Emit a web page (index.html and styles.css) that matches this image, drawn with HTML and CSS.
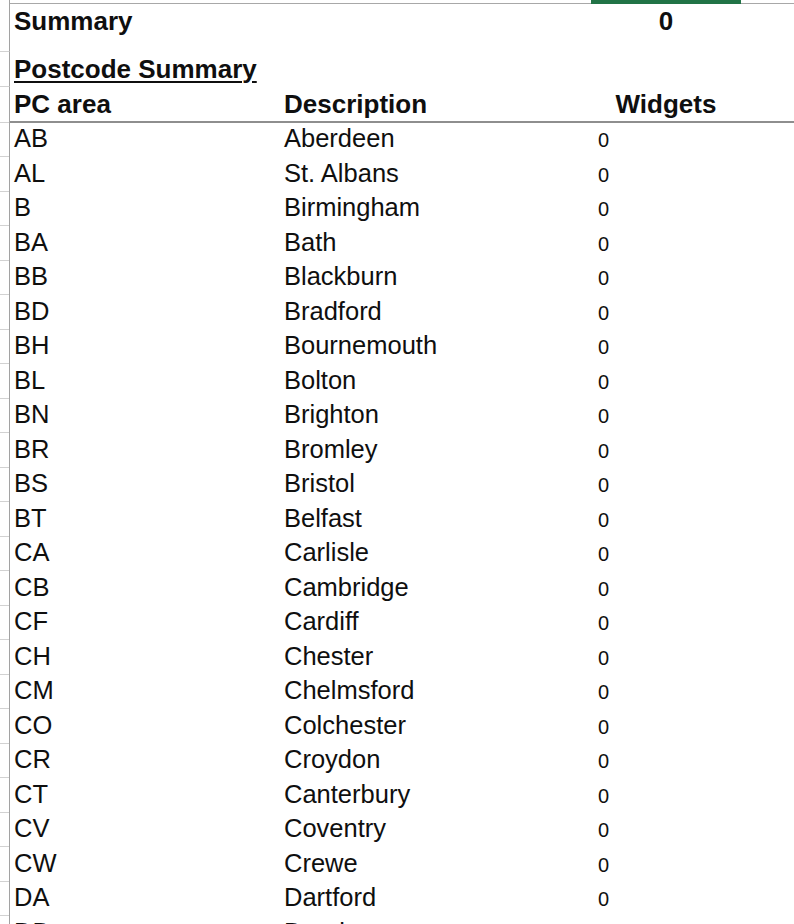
FILE: index.html
```html
<!DOCTYPE html>
<html lang="en">
<head>
<meta charset="utf-8">
<title>Postcode Summary</title>
<link rel="stylesheet" href="styles.css">
</head>
<body>
<div class="sheet">
  <div class="row strip">
    <div class="gut"></div>
    <div class="cell a"></div>
    <div class="cell b"></div>
    <div class="cell c sel"></div>
    <div class="cell d"></div>
  </div>
  <div class="row summary">
    <div class="gut"></div>
    <div class="cell a bold">Summary</div>
    <div class="cell b"></div>
    <div class="cell c bold center">0</div>
    <div class="cell d"></div>
  </div>
  <div class="row title">
    <div class="gut"></div>
    <div class="cell a bold wide"><span class="ul">Postcode Summary</span></div>
    <div class="cell c"></div>
    <div class="cell d"></div>
  </div>
  <div class="row head">
    <div class="gut"></div>
    <div class="cell a bold">PC area</div>
    <div class="cell b bold">Description</div>
    <div class="cell c bold center">Widgets</div>
    <div class="cell d"></div>
  </div>
  <div class="row data"><div class="gut"></div><div class="cell a">AB</div><div class="cell b">Aberdeen</div><div class="cell c num">0</div><div class="cell d"></div></div>
  <div class="row data"><div class="gut"></div><div class="cell a">AL</div><div class="cell b">St. Albans</div><div class="cell c num">0</div><div class="cell d"></div></div>
  <div class="row data"><div class="gut"></div><div class="cell a">B</div><div class="cell b">Birmingham</div><div class="cell c num">0</div><div class="cell d"></div></div>
  <div class="row data"><div class="gut"></div><div class="cell a">BA</div><div class="cell b">Bath</div><div class="cell c num">0</div><div class="cell d"></div></div>
  <div class="row data"><div class="gut"></div><div class="cell a">BB</div><div class="cell b">Blackburn</div><div class="cell c num">0</div><div class="cell d"></div></div>
  <div class="row data"><div class="gut"></div><div class="cell a">BD</div><div class="cell b">Bradford</div><div class="cell c num">0</div><div class="cell d"></div></div>
  <div class="row data"><div class="gut"></div><div class="cell a">BH</div><div class="cell b">Bournemouth</div><div class="cell c num">0</div><div class="cell d"></div></div>
  <div class="row data"><div class="gut"></div><div class="cell a">BL</div><div class="cell b">Bolton</div><div class="cell c num">0</div><div class="cell d"></div></div>
  <div class="row data"><div class="gut"></div><div class="cell a">BN</div><div class="cell b">Brighton</div><div class="cell c num">0</div><div class="cell d"></div></div>
  <div class="row data"><div class="gut"></div><div class="cell a">BR</div><div class="cell b">Bromley</div><div class="cell c num">0</div><div class="cell d"></div></div>
  <div class="row data"><div class="gut"></div><div class="cell a">BS</div><div class="cell b">Bristol</div><div class="cell c num">0</div><div class="cell d"></div></div>
  <div class="row data"><div class="gut"></div><div class="cell a">BT</div><div class="cell b">Belfast</div><div class="cell c num">0</div><div class="cell d"></div></div>
  <div class="row data"><div class="gut"></div><div class="cell a">CA</div><div class="cell b">Carlisle</div><div class="cell c num">0</div><div class="cell d"></div></div>
  <div class="row data"><div class="gut"></div><div class="cell a">CB</div><div class="cell b">Cambridge</div><div class="cell c num">0</div><div class="cell d"></div></div>
  <div class="row data"><div class="gut"></div><div class="cell a">CF</div><div class="cell b">Cardiff</div><div class="cell c num">0</div><div class="cell d"></div></div>
  <div class="row data"><div class="gut"></div><div class="cell a">CH</div><div class="cell b">Chester</div><div class="cell c num">0</div><div class="cell d"></div></div>
  <div class="row data"><div class="gut"></div><div class="cell a">CM</div><div class="cell b">Chelmsford</div><div class="cell c num">0</div><div class="cell d"></div></div>
  <div class="row data"><div class="gut"></div><div class="cell a">CO</div><div class="cell b">Colchester</div><div class="cell c num">0</div><div class="cell d"></div></div>
  <div class="row data"><div class="gut"></div><div class="cell a">CR</div><div class="cell b">Croydon</div><div class="cell c num">0</div><div class="cell d"></div></div>
  <div class="row data"><div class="gut"></div><div class="cell a">CT</div><div class="cell b">Canterbury</div><div class="cell c num">0</div><div class="cell d"></div></div>
  <div class="row data"><div class="gut"></div><div class="cell a">CV</div><div class="cell b">Coventry</div><div class="cell c num">0</div><div class="cell d"></div></div>
  <div class="row data"><div class="gut"></div><div class="cell a">CW</div><div class="cell b">Crewe</div><div class="cell c num">0</div><div class="cell d"></div></div>
  <div class="row data"><div class="gut"></div><div class="cell a">DA</div><div class="cell b">Dartford</div><div class="cell c num">0</div><div class="cell d"></div></div>
  <div class="row data"><div class="gut"></div><div class="cell a">DD</div><div class="cell b">Dundee</div><div class="cell c num">0</div><div class="cell d"></div></div>
</div>
</body>
</html>
```
FILE: styles.css
```css
html, body {
  margin: 0;
  padding: 0;
  background: #ffffff;
}

.sheet {
  width: 794px;
  height: 924px;
  overflow: hidden;
  font-family: "Liberation Sans", Arial, sans-serif;
  font-size: 25.5px;
  color: #0f0f0f;
}

.row {
  display: grid;
  grid-template-columns: 10px 269px 312px 150px 1fr;
  align-items: baseline;
  line-height: 34px;
}

.gut {
  align-self: stretch;
  border-right: 1px solid #a2a2a2;
  border-bottom: 1px solid #d2d2d2;
}

.cell {
  white-space: nowrap;
  overflow: visible;
  min-width: 0;
}

.a { padding-left: 4px; }
.b { padding-left: 5px; }
.c { padding-left: 0; }

.wide { grid-column: 2 / 4; }

.bold {
  font-weight: bold;
  font-size: 26px;
}

.center { text-align: center; }

.num {
  font-size: 20px;
  padding-left: 7px;
}

.ul {
  text-decoration: underline;
  text-decoration-thickness: 2px;
  text-underline-offset: 3px;
}

/* top strip with selected column marker */
.strip {
  height: 4px;
  line-height: 4px;
  align-items: stretch;
}
.strip .gut { border-bottom: none; }
.strip .cell {
  border-bottom: 1px solid #a8a8a8;
}
.strip .sel {
  background: #217346;
  border-bottom-color: #217346;
}

.summary { height: 48px; }
.title { height: 35px; }
.head {
  height: 34px;
  align-items: baseline;
}
.head .cell {
  align-self: stretch;
  border-bottom: 2px solid #8e8e8e;
  box-sizing: border-box;
}
.data { height: 34.5px; }
```
